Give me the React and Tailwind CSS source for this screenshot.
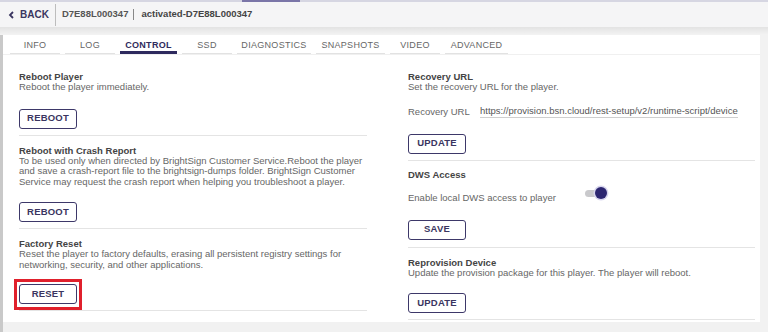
import React from "react";

const tabs = [
  { label: "INFO", w: "w-[50px]" },
  { label: "LOG", w: "w-[50px]" },
  { label: "CONTROL", w: "w-[57px]", active: true },
  { label: "SSD", w: "w-[50px]" },
  { label: "DIAGNOSTICS", w: "w-[74px]" },
  { label: "SNAPSHOTS", w: "w-[69px]" },
  { label: "VIDEO", w: "w-[50px]" },
  { label: "ADVANCED", w: "w-[63px]" },
];

function Btn({ children }) {
  return (
    <button className="w-[58px] h-[20px] border-[1.5px] border-[#3d3869] rounded-[3px] bg-white text-[9.5px] font-bold text-[#3a3560] tracking-[0.2px] flex items-center justify-center">
      {children}
    </button>
  );
}

function Title({ children }) {
  return <div className="text-[9.5px] leading-[11px] font-bold text-[#444] whitespace-nowrap">{children}</div>;
}

function Desc({ children }) {
  return <div className="text-[9.5px] leading-[10.5px] text-[#666] whitespace-nowrap">{children}</div>;
}

function Sep() {
  return <div className="h-px bg-[#e4e4e4]" />;
}

export default function App() {
  return (
    <div
      className="w-[768px] h-[332px] overflow-hidden bg-[#f1f1f1] flex flex-col"
      style={{ fontFamily: '"Liberation Sans", Arial, sans-serif' }}
    >
      {/* top strip */}
      <div className="h-[2px] bg-[#d6d6e2] flex">
        <div className="ml-[242px] w-[58px] bg-[#7b76a8]" />
      </div>
      {/* header */}
      <div className="h-[25px] bg-[#f5f5f6] flex items-center">
        <div className="flex items-center pl-[8px] pr-[5px] gap-[3px] text-[10px] font-bold text-[#3a3560]">
          <svg width="7" height="8" viewBox="0 0 7 8">
            <path d="M5 1 L2 4 L5 7" fill="none" stroke="#3a3560" strokeWidth="1.8" />
          </svg>
          <span className="ml-[2px]">BACK</span>
        </div>
        <div className="w-px h-[22px] bg-[#bdbdbd] ml-[1px]" />
        <div className="ml-[6px] text-[9.5px] font-bold text-[#555]">D7E88L000347</div>
        <div className="ml-[5px] w-px h-[11px] bg-[#888]" />
        <div className="ml-[7px] text-[9.5px] font-bold text-[#444]">activated-D7E88L000347</div>
      </div>
      {/* shade */}
      <div className="h-[8px] bg-gradient-to-b from-[#e3e3e3] to-[#f3f3f3]" />
      {/* panel */}
      <div className="flex flex-1 min-h-0">
        <div className="w-[3px] bg-[#c9c9c9]" />
        <div className="w-[757px] bg-white flex flex-col h-[287px]">
          {/* tabs */}
          <div className="flex gap-[5px] pl-[7px] pt-[3px] border-b border-[#f0f0f0]">
            {tabs.map((t) => (
              <div
                key={t.label}
                className={`${t.w} h-[16px] flex items-center justify-center text-[9px] tracking-[0.3px] ${
                  t.active
                    ? "text-[#2f2b5c] font-bold border-b-[3px] border-[#2e2a5e]"
                    : "text-[#666] border-b border-[#e2e2e2]"
                }`}
              >
                <span className={t.active ? "mt-[2px]" : ""}>{t.label}</span>
              </div>
            ))}
          </div>
          {/* columns */}
          <div className="flex pl-[16px] pt-[16px] gap-[41px]">
            {/* left */}
            <div className="w-[348px] flex flex-col">
              <Title>Reboot Player</Title>
              <Desc>Reboot the player immediately.</Desc>
              <div className="mt-[16px]">
                <Btn>REBOOT</Btn>
              </div>
              <div className="mt-[6px]"><Sep /></div>
              <div className="mt-[9px]">
                <Title>Reboot with Crash Report</Title>
                <Desc>
                  To be used only when directed by BrightSign Customer Service.Reboot the player
                  <br />
                  and save a crash-report file to the brightsign-dumps folder. BrightSign Customer
                  <br />
                  Service may request the crash report when helping you troubleshoot a player.
                </Desc>
              </div>
              <div className="mt-[15px]">
                <Btn>REBOOT</Btn>
              </div>
              <div className="mt-[6px]"><Sep /></div>
              <div className="mt-[9px]">
                <Title>Factory Reset</Title>
                <Desc>
                  Reset the player to factory defaults, erasing all persistent registry settings for
                  <br />
                  networking, security, and other applications.
                </Desc>
              </div>
              <div className="mt-[14px] relative">
                <Btn>RESET</Btn>
                <div className="absolute left-[-5px] top-[-5px] w-[68px] h-[31px] border-[3px] border-[#e0202c]" />
              </div>
              <div className="mt-[6px]"><Sep /></div>
            </div>
            {/* right */}
            <div className="w-[347px] flex flex-col">
              <Title>Recovery URL</Title>
              <Desc>Set the recovery URL for the player.</Desc>
              <div className="mt-[12px] flex items-end h-[13px]">
                <div className="w-[72px] text-[9.5px] text-[#666] leading-[12px]">Recovery URL</div>
                <input
                  readOnly
                  value="https://provision.bsn.cloud/rest-setup/v2/runtime-script/device-object"
                  className="w-[258px] h-[13px] p-0 text-[9.5px] text-[#555] leading-[12px] border-0 border-b border-[#cfcfcf] outline-none bg-transparent"
                  style={{ fontFamily: '"Liberation Sans", Arial, sans-serif' }}
                />
              </div>
              <div className="mt-[16px]">
                <Btn>UPDATE</Btn>
              </div>
              <div className="mt-[6px]"><Sep /></div>
              <div className="mt-[8px]">
                <Title>DWS Access</Title>
              </div>
              <div className="mt-[6px] h-[18px] flex items-center relative">
                <div className="text-[9.5px] text-[#666] w-[177px] mt-[8px]">Enable local DWS access to player</div>
                <div className="relative w-[22px] h-[12px] -mt-[3px]">
                  <div className="absolute left-0 top-[3px] w-[18px] h-[7px] rounded-full bg-[#c9c9cc]" />
                  <div className="absolute left-[10px] top-0 w-[12px] h-[12px] rounded-full bg-[#2c2670] shadow-[0_0_0_1.5px_#d8d6ee]" />
                </div>
              </div>
              <div className="mt-[16px]">
                <Btn>SAVE</Btn>
              </div>
              <div className="mt-[7px]"><Sep /></div>
              <div className="mt-[9px]">
                <Title>Reprovision Device</Title>
                <Desc>Update the provision package for this player. The player will reboot.</Desc>
              </div>
              <div className="mt-[15px]">
                <Btn>UPDATE</Btn>
              </div>
              <div className="mt-[6px]"><Sep /></div>
            </div>
          </div>
        </div>
        <div className="flex-1 bg-[#f2f2f2]" />
      </div>
    </div>
  );
}
